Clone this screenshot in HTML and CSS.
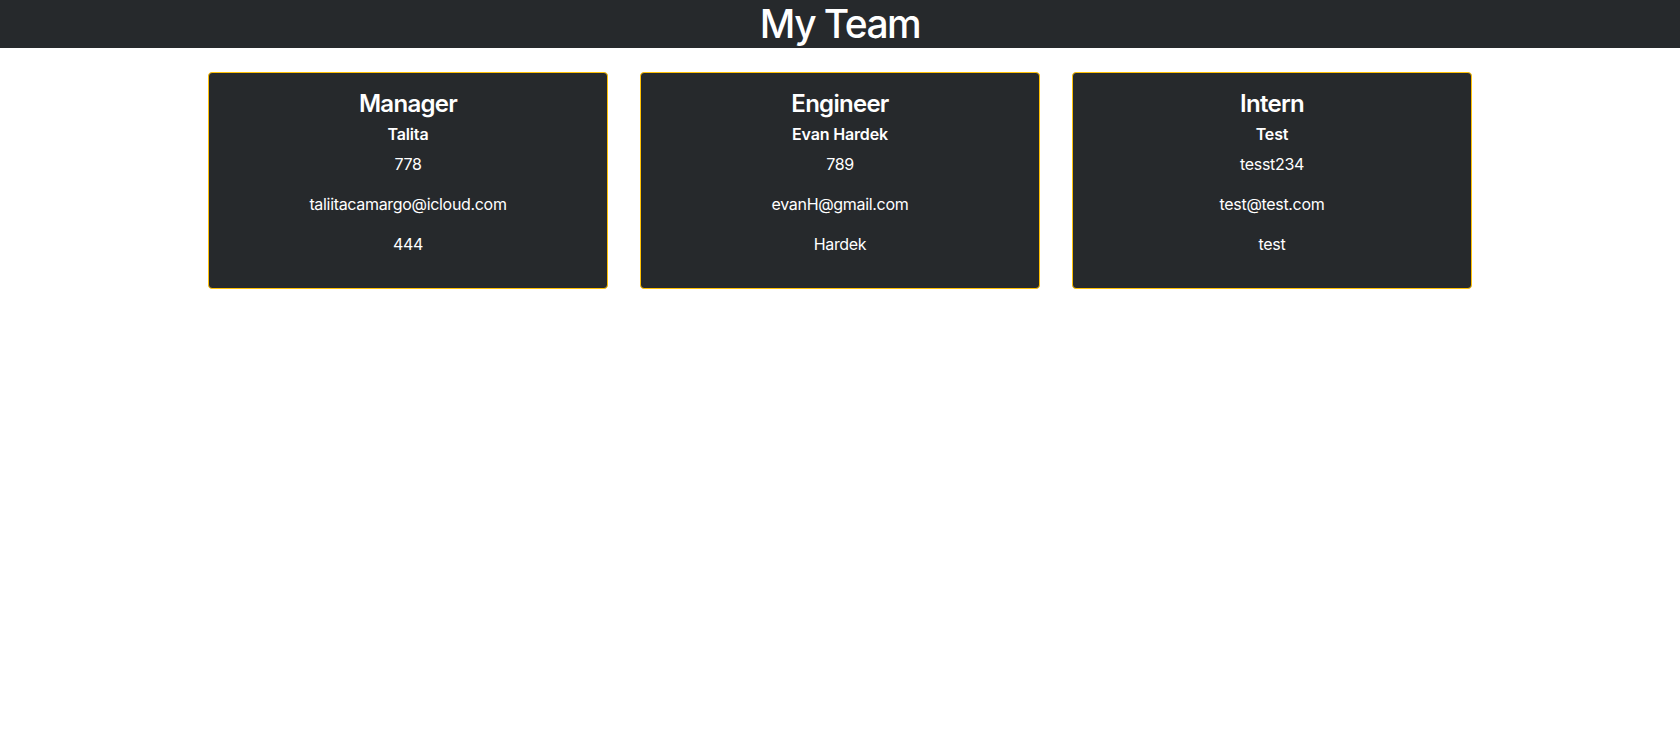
FILE: index.html
```html
<!DOCTYPE html>
<html lang="en">
<head>
    <meta charset="UTF-8">
    <meta name="viewport" content="width=device-width, initial-scale=1.0">
    <title>My Team</title>
    <link rel="stylesheet" href="styles.css">
</head>
<body>
    <header class="page-header">
        <h1>My Team</h1>
    </header>
    <main class="team">
        <div class="card">
            <h4 class="card-title">Manager</h4>
            <h6 class="card-name">Talita</h6>
            <p>778</p>
            <p>taliitacamargo@icloud.com</p>
            <p>444</p>
        </div>
        <div class="card">
            <h4 class="card-title">Engineer</h4>
            <h6 class="card-name">Evan Hardek</h6>
            <p>789</p>
            <p>evanH@gmail.com</p>
            <p>Hardek</p>
        </div>
        <div class="card">
            <h4 class="card-title">Intern</h4>
            <h6 class="card-name">Test</h6>
            <p>tesst234</p>
            <p>test@test.com</p>
            <p>test</p>
        </div>
    </main>
</body>
</html>
```

FILE: styles.css
```css
body {
    font-family: "Inter", "Noto Sans", sans-serif;
    background-color: #fff;
    color: #212529;
    margin: 0;
    padding: 0;
}
.page-header {
    background-color: #26292c;
    color: #fff;
    text-align: center;
}
.page-header h1 {
    margin: 0;
    font-size: 39px;
    font-weight: 500;
    line-height: 48px;
    letter-spacing: -0.04em;
}
.team {
    display: flex;
    justify-content: center;
    gap: 32px;
    padding-top: 24px;
}
.card {
    width: 400px;
    box-sizing: border-box;
    background-color: #26292c;
    color: #fff;
    border: 1px solid #ffc107;
    border-radius: 4px;
    padding: 15px 16px 16px;
    text-align: center;
}
.card-title {
    font-size: 24px;
    font-weight: 600;
    line-height: 31px;
    letter-spacing: -0.03em;
    margin: 0 0 3px;
}
.card-name {
    font-size: 16px;
    font-weight: 600;
    line-height: 24px;
    letter-spacing: -0.01em;
    margin: 0 0 6px;
}
.card p {
    font-size: 16px;
    line-height: 24px;
    letter-spacing: -0.02em;
    margin: 0 0 16px;
}
```
